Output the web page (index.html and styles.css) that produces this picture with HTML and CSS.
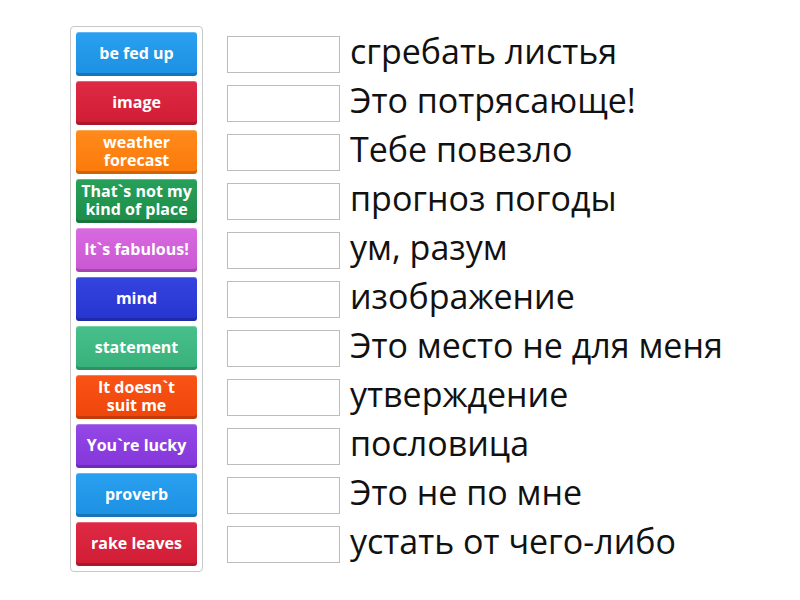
FILE: index.html
```html
<!DOCTYPE html>
<html>
<head>
    <title>Match up</title>
    <link rel="stylesheet" href="styles.css">
</head>
<body>
    <div class="game">
        <div class="tiles">
            <div class="tile blue">be fed up</div>
            <div class="tile red">image</div>
            <div class="tile orange">weather forecast</div>
            <div class="tile green">That`s not my kind of place</div>
            <div class="tile pink">It`s fabulous!</div>
            <div class="tile navy">mind</div>
            <div class="tile mint">statement</div>
            <div class="tile flame">It doesn`t suit&nbsp;me</div>
            <div class="tile violet">You`re lucky</div>
            <div class="tile blue">proverb</div>
            <div class="tile red">rake leaves</div>
        </div>
        <div class="targets">
            <div class="row"><div class="slot"></div><span>сгребать листья</span></div>
            <div class="row"><div class="slot"></div><span>Это потрясающе!</span></div>
            <div class="row"><div class="slot"></div><span>Тебе повезло</span></div>
            <div class="row"><div class="slot"></div><span>прогноз погоды</span></div>
            <div class="row"><div class="slot"></div><span>ум, разум</span></div>
            <div class="row"><div class="slot"></div><span>изображение</span></div>
            <div class="row"><div class="slot"></div><span>Это место не для меня</span></div>
            <div class="row"><div class="slot"></div><span>утверждение</span></div>
            <div class="row"><div class="slot"></div><span>пословица</span></div>
            <div class="row"><div class="slot"></div><span>Это не по мне</span></div>
            <div class="row"><div class="slot"></div><span>устать от чего-либо</span></div>
        </div>
    </div>
</body>
</html>
```

FILE: styles.css
```css
* { margin: 0; padding: 0; box-sizing: border-box; }
body { background: #fff; font-family: "Open Sans", "Noto Sans", sans-serif; color: #111; }
.game { display: flex; align-items: flex-start; padding: 26px 0 0 70px; }
.tiles { display: flex; flex-direction: column; gap: 5px; padding: 5px; border: 1px solid #c8c8c8; border-radius: 4px; }
.tile { width: 121px; height: 44px; display: flex; align-items: center; justify-content: center; text-align: center; padding: 0 2px 2px; color: #fff; font-weight: 700; font-size: 16px; line-height: 18px; border-radius: 3px; box-shadow: inset 0 -3px 0 rgba(0,0,0,0.18), inset 0 1px 0 rgba(255,255,255,0.25); }
.blue { background: linear-gradient(#2aa0f0, #1c90e2); }
.red { background: linear-gradient(#de2a44, #d01c34); }
.orange { background: linear-gradient(#ff8a1c, #fb7a0a); }
.green { background: linear-gradient(#27a05a, #1d8c48); }
.pink { background: linear-gradient(#d86ae0, #c957d2); }
.navy { background: linear-gradient(#3444e0, #2734cf); }
.mint { background: linear-gradient(#48c08c, #37b079); }
.flame { background: linear-gradient(#fa5316, #ee460a); }
.violet { background: linear-gradient(#9448e6, #8436da); }
.targets { display: flex; flex-direction: column; gap: 5px; padding-top: 6px; margin-left: 24px; }
.row { height: 44px; display: flex; align-items: center; gap: 10px; }
.slot { width: 113px; height: 37px; border: 1px solid #bdbdbd; background: #fff; }
.row span { font-size: 34px; line-height: 40px; padding-bottom: 6px; white-space: nowrap; }
```
